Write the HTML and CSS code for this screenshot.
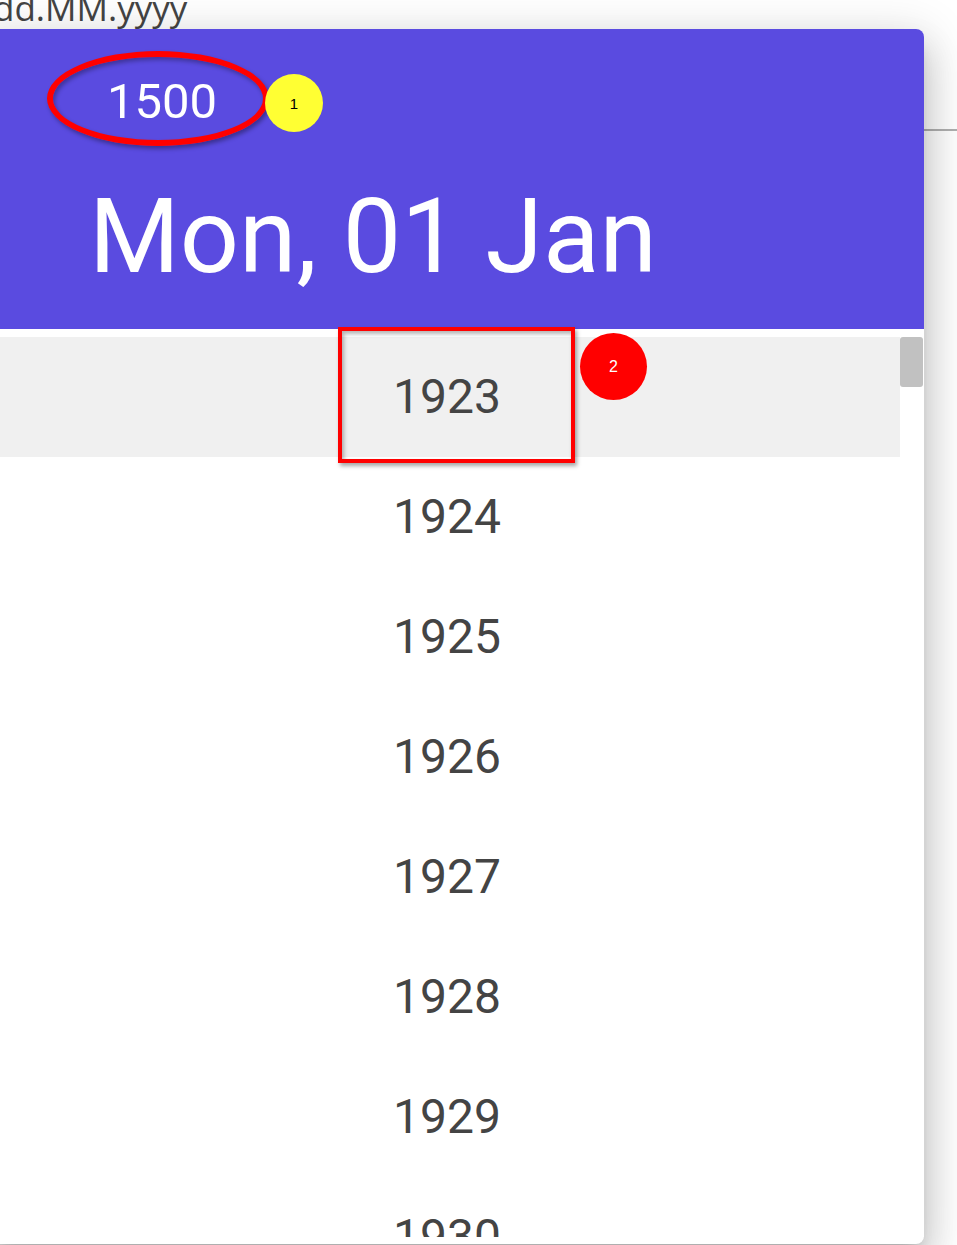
FILE: index.html
```html
<!DOCTYPE html>
<html>
<head>
<meta charset="utf-8">
<link rel="stylesheet" href="styles.css">
</head>
<body>
<div class="field">
  <div class="field-label">dd.MM.yyyy</div>
  <div class="field-line"></div>
</div>

<div class="dialog">
  <div class="header">
    <div class="header-year">1500</div>
    <div class="header-date">Mon, 01 Jan</div>
  </div>
  <div class="list-wrap">
    <div class="list">
      <div class="year selected">1923</div>
      <div class="year">1924</div>
      <div class="year">1925</div>
      <div class="year">1926</div>
      <div class="year">1927</div>
      <div class="year">1928</div>
      <div class="year">1929</div>
      <div class="year">1930</div>
    </div>
    <div class="scrollbar"><div class="thumb"></div></div>
  </div>
</div>

<div class="mark-ellipse"></div>
<div class="badge badge-yellow">1</div>
<div class="mark-rect"></div>
<div class="badge badge-red">2</div>
</body>
</html>
```

FILE: styles.css
```css
html, body {
  margin: 0;
  padding: 0;
  background: #ffffff;
  font-family: Roboto, "Noto Sans", Arial, sans-serif;
  overflow: hidden;
}

.field {
  height: 200px;
  display: flex;
  flex-direction: column;
}

.field-label {
  font-family: "Open Sans", Roboto, sans-serif;
  font-size: 35px;
  line-height: 30px;
  height: 29px;
  color: #444444;
  margin-left: -7px;
  margin-top: -7px;
  white-space: nowrap;
}

.field-line {
  margin-top: 107px;
  height: 2px;
  background: #b0b0b0;
}

.dialog {
  position: absolute;
  left: -10px;
  top: 29px;
  width: 934px;
  height: 1215px;
  background: #ffffff;
  border-radius: 8px;
  overflow: hidden;
  display: flex;
  flex-direction: column;
  box-shadow: 0 11px 15px -7px rgba(0,0,0,.2), 0 24px 38px 3px rgba(0,0,0,.14), 0 9px 46px 8px rgba(0,0,0,.12);
}

.header {
  height: 300px;
  flex: none;
  background: #5a4be0;
  color: #ffffff;
  box-sizing: border-box;
  padding: 45px 0 0 117px;
  display: flex;
  flex-direction: column;
}

.header-year {
  font-size: 49px;
  line-height: 56px;
  height: 56px;
}

.header-date {
  font-size: 104px;
  line-height: 120px;
  margin-top: 47px;
  margin-left: -18px;
  white-space: nowrap;
}

.list-wrap {
  flex: 1;
  display: flex;
  margin-top: 8px;
  margin-bottom: 7px;
  overflow: hidden;
}

.list {
  flex: 1;
  display: flex;
  flex-direction: column;
  overflow: hidden;
}

.year {
  flex: none;
  height: 120px;
  line-height: 120px;
  padding-left: 4px;
  text-align: center;
  font-size: 48px;
  color: #444444;
}

.year.selected {
  background: #f0f0f0;
}

.scrollbar {
  width: 24px;
  flex: none;
  background: #ffffff;
}

.thumb {
  height: 50px;
  width: 23px;
  background: #c1c1c1;
  border-radius: 3px;
}

.mark-ellipse {
  position: absolute;
  left: 47px;
  top: 51px;
  width: 210px;
  height: 83px;
  border: 6px solid #ff0000;
  border-radius: 50%;
  box-shadow: 2px 3px 4px rgba(0,0,0,.35), inset 2px 3px 4px rgba(0,0,0,.3);
}

.badge {
  position: absolute;
  border-radius: 50%;
  display: flex;
  align-items: center;
  justify-content: center;
  font-family: Arial, "Liberation Sans", sans-serif;
}

.badge-yellow {
  left: 265px;
  top: 74px;
  width: 58px;
  height: 58px;
  background: #ffff33;
  color: #000000;
  font-size: 15px;
}

.mark-rect {
  position: absolute;
  left: 338px;
  top: 327px;
  width: 229px;
  height: 128px;
  border: 4px solid #ff0000;
  box-shadow: 2px 3px 4px rgba(0,0,0,.35), inset 2px 3px 4px rgba(0,0,0,.3);
}

.badge-red {
  left: 580px;
  top: 333px;
  width: 67px;
  height: 67px;
  background: #ff0000;
  color: #ffffff;
  font-size: 16px;
}
```
